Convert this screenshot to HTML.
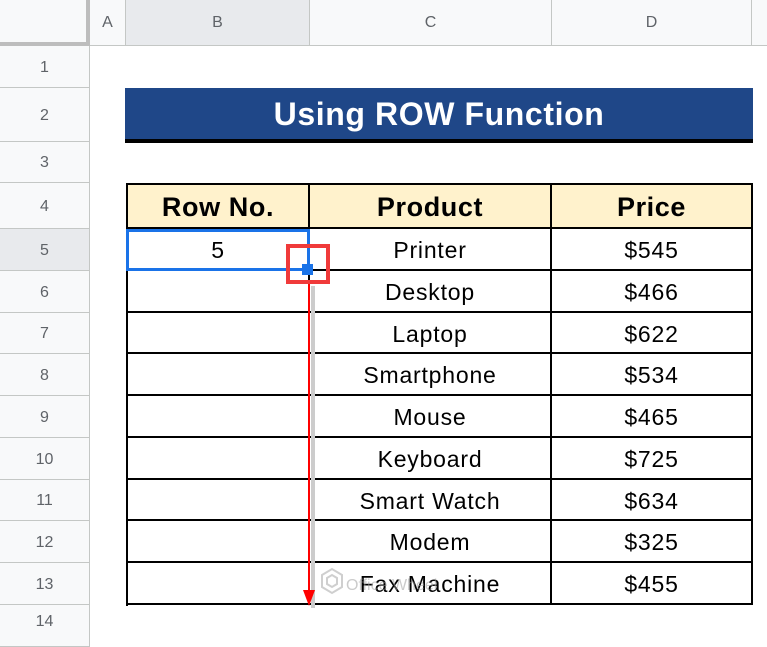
<!DOCTYPE html>
<html><head><meta charset="utf-8"><style>
*{margin:0;padding:0;box-sizing:border-box}
body{width:767px;height:622px;overflow:hidden;background:#fff;position:relative;font-family:"Liberation Sans",Arial,sans-serif}
.a{position:absolute}
.hdr{background:#f8f9fa;color:#5f6368;font-size:16px;display:flex;align-items:center;justify-content:center}
.rh{left:0;width:90px;border-bottom:1px solid #c4c7c5;border-right:1px solid #c4c7c5;padding-top:2px}
.ch{top:0;height:46px;border-right:1px solid #c4c7c5;border-bottom:1px solid #c4c7c5}
.c{display:flex;align-items:center;justify-content:center;font-size:23px;letter-spacing:0.8px;padding-top:3px;color:#000;border-right:2px solid #000;border-bottom:2px solid #000}
</style></head><body>
<div class="a hdr" style="left:0;top:0;width:90px;height:46px;border-right:4px solid #bdbdbd;border-bottom:4px solid #bdbdbd"></div>
<div class="a hdr ch" style="left:90px;width:36px">A</div>
<div class="a hdr ch" style="left:126px;width:184px;background:#e8eaed">B</div>
<div class="a hdr ch" style="left:310px;width:242px">C</div>
<div class="a hdr ch" style="left:552px;width:200px">D</div>
<div class="a hdr ch" style="left:752px;width:15px;border-right:none"></div>
<div class="a hdr rh" style="top:46px;height:42px">1</div>
<div class="a hdr rh" style="top:88px;height:54px">2</div>
<div class="a hdr rh" style="top:142px;height:41px">3</div>
<div class="a hdr rh" style="top:183px;height:46px">4</div>
<div class="a hdr rh" style="top:229px;height:42px;background:#e8eaed">5</div>
<div class="a hdr rh" style="top:271px;height:42px">6</div>
<div class="a hdr rh" style="top:313px;height:41px">7</div>
<div class="a hdr rh" style="top:354px;height:42px">8</div>
<div class="a hdr rh" style="top:396px;height:42px">9</div>
<div class="a hdr rh" style="top:438px;height:42px">10</div>
<div class="a hdr rh" style="top:480px;height:41px">11</div>
<div class="a hdr rh" style="top:521px;height:42px">12</div>
<div class="a hdr rh" style="top:563px;height:42px">13</div>
<div class="a hdr rh" style="top:605px;height:42px;align-items:flex-start;padding-top:8px">14</div>
<div class="a" style="left:125px;top:88px;width:628px;height:51px;background:#1f4788;color:#fff;font-weight:bold;font-size:32px;letter-spacing:0.6px;display:flex;align-items:center;justify-content:center;padding-top:2px">Using ROW Function</div>
<div class="a" style="left:125px;top:139px;width:628px;height:4px;background:#000"></div>
<div class="a" style="left:126px;top:183px;width:627px;height:423px;border-left:2px solid #000;border-top:2px solid #000"></div>
<div id="t"></div>
<script>
var rows=[["Row No.","Product","Price"],["5","Printer","$545"],["","Desktop","$466"],["","Laptop","$622"],["","Smartphone","$534"],["","Mouse","$465"],["","Keyboard","$725"],["","Smart Watch","$634"],["","Modem","$325"],["","Fax Machine","$455"]];
var ys=[183,229,271,313,354,396,438,480,521,563,605];
var xs=[126,310,552,753];var h="";
for(var i=0;i<rows.length;i++)for(var j=0;j<3;j++){
var st="left:"+(xs[j]+(j==0?2:0))+"px;top:"+(ys[i]+(i==0?2:0))+"px;width:"+(xs[j+1]-xs[j]-(j==0?2:0))+"px;height:"+(ys[i+1]-ys[i]-(i==0?2:0))+"px;";
if(i==0)st+="background:#fff2cc;font-weight:bold;font-size:27px;letter-spacing:0.6px;";
h+='<div class="a c" style="'+st+'">'+rows[i][j]+'</div>';}
document.getElementById("t").innerHTML=h;
</script>
<div class="a" style="left:126px;top:229px;width:184px;height:42px;border:3px solid #1a73e8"></div>
<svg class="a" style="left:0;top:0" width="767" height="622">
<line x1="313" y1="286" x2="313" y2="608" stroke="#ccc" stroke-width="4"/>
<line x1="309" y1="284" x2="309" y2="602" stroke="#f00" stroke-width="2"/>
<polygon points="303,590 315,590 309,606" fill="#f00"/>
<rect x="288" y="246" width="40" height="36" fill="none" stroke="#f03a3a" stroke-width="4"/>
<rect x="302" y="264" width="11" height="11" fill="#1a73e8"/>
<g opacity="0.35" fill="none" stroke="#777" stroke-width="2"><path d="M322 575 l10 -6 l10 6 v12 l-10 6 l-10 -6z"/><path d="M327 578 l5 -3 l5 3 v6 l-5 3 l-5 -3z"/></g>
<text x="346" y="590" font-family="Liberation Sans" font-size="16" fill="#999" opacity="0.5">Office Wheel</text>
</svg>
</body></html>
